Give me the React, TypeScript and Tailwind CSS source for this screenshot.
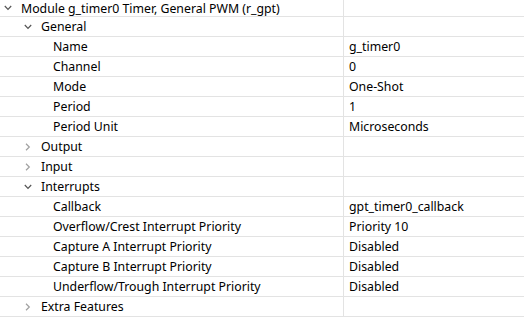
import * as React from "react";

type Row = {
  label: string;
  value?: string;
  level: number;
  chevron?: "open" | "closed";
};

const ROWS: Row[] = [
  { label: "Module g_timer0 Timer, General PWM (r_gpt)", level: 0, chevron: "open" },
  { label: "General", level: 1, chevron: "open" },
  { label: "Name", value: "g_timer0", level: 2 },
  { label: "Channel", value: "0", level: 2 },
  { label: "Mode", value: "One-Shot", level: 2 },
  { label: "Period", value: "1", level: 2 },
  { label: "Period Unit", value: "Microseconds", level: 2 },
  { label: "Output", level: 1, chevron: "closed" },
  { label: "Input", level: 1, chevron: "closed" },
  { label: "Interrupts", level: 1, chevron: "open" },
  { label: "Callback", value: "gpt_timer0_callback", level: 2 },
  { label: "Overflow/Crest Interrupt Priority", value: "Priority 10", level: 2 },
  { label: "Capture A Interrupt Priority", value: "Disabled", level: 2 },
  { label: "Capture B Interrupt Priority", value: "Disabled", level: 2 },
  { label: "Underflow/Trough Interrupt Priority", value: "Disabled", level: 2 },
  { label: "Extra Features", level: 1, chevron: "closed" },
];

const INDENT = ["pl-[4px]", "pl-[24px]", "pl-[53px]"];

function Chevron({ kind }: { kind: "open" | "closed" }) {
  if (kind === "open") {
    return (
      <svg width="8" height="6" viewBox="0 0 8 6" className="mr-[9px] shrink-0">
        <path d="M0.8 1 L4 4.3 L7.2 1" fill="none" stroke="#555" strokeWidth="1.2" />
      </svg>
    );
  }
  return (
    <svg width="6" height="8" viewBox="0 0 6 8" className="ml-[1px] mr-[10px] shrink-0">
      <path d="M1 0.8 L4.3 4 L1 7.2" fill="none" stroke="#a0a0a0" strokeWidth="1.2" />
    </svg>
  );
}

export default function App() {
  return (
    <div
      className="w-[524px] h-[319px] bg-white overflow-hidden text-[12.3px] text-black"
      style={{ fontFamily: '"Noto Sans", "Noto Sans CJK SC", sans-serif' }}
    >
      {ROWS.map((row, i) => (
        <div
          key={i}
          className={`flex border-b border-[#e3e3e3] ${i === 0 ? "h-[17px]" : "h-[20px]"}`}
        >
          <div className={`w-[343px] flex items-center whitespace-nowrap ${INDENT[row.level]}`}>
            {row.chevron && <Chevron kind={row.chevron} />}
            <span className="leading-none pt-[2px]">{row.label}</span>
          </div>
          <div className="flex-1 border-l border-[#e3e3e3] flex items-center pl-[5px] whitespace-nowrap">
            {row.value && <span className="leading-none pt-[2px]">{row.value}</span>}
          </div>
        </div>
      ))}
    </div>
  );
}
